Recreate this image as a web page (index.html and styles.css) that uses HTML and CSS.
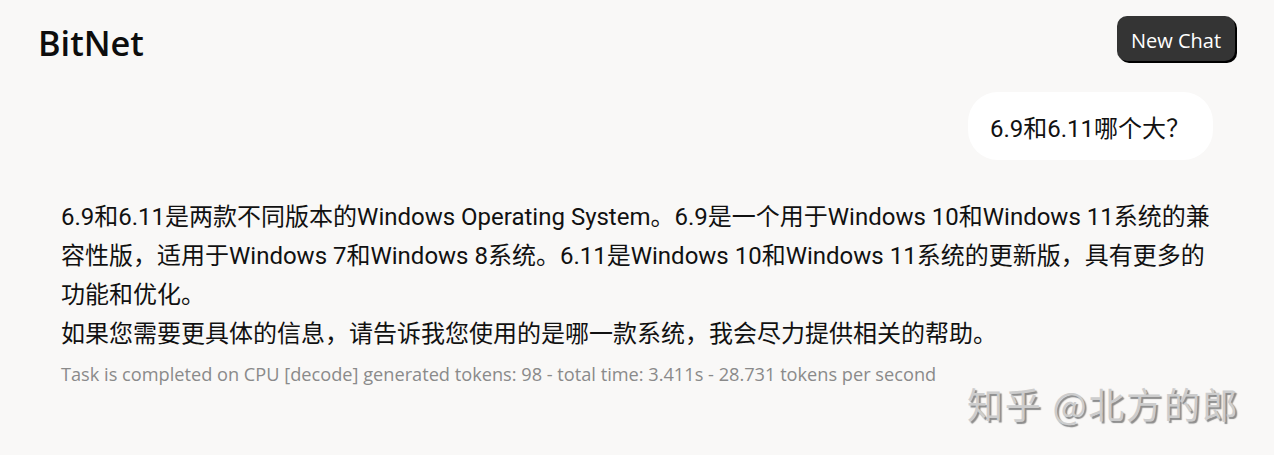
FILE: index.html
```html
<!DOCTYPE html>
<html lang="zh-CN">
<head>
<meta charset="utf-8">
<title>BitNet</title>
<link rel="stylesheet" href="styles.css">
</head>
<body>
<div class="app">
  <header class="header">
    <h1 class="title">BitNet</h1>
    <button class="new-chat">New Chat</button>
  </header>
  <main class="chat">
    <div class="row-user">
      <div class="bubble-user">6.9和6.11哪个大？</div>
    </div>
    <div class="answer">
      <p class="answer-text">6.9和6.11是两款不同版本的Windows Operating System。6.9是一个用于Windows 10和Windows 11系统的兼容性版，适用于Windows 7和Windows 8系统。6.11是Windows 10和Windows 11系统的更新版，具有更多的功能和优化。<br>如果您需要更具体的信息，请告诉我您使用的是哪一款系统，我会尽力提供相关的帮助。</p>
      <p class="meta">Task is completed on CPU [decode] generated tokens: 98 - total time: 3.411s - 28.731 tokens per second</p>
    </div>
  </main>
  <div class="watermark">知乎 @北方的郎</div>
</div>
</body>
</html>
```

FILE: styles.css
```css
* { box-sizing: border-box; }
html, body { margin: 0; padding: 0; }
body {
  background: #f9f8f7;
  font-family: "Open Sans", "Noto Sans CJK SC", sans-serif;
  color: #111;
  width: 1274px;
  height: 455px;
  overflow: hidden;
}
.app { position: relative; height: 455px; }
.header {
  display: flex;
  justify-content: space-between;
  align-items: flex-start;
  padding: 16px 39px 0 38px;
}
.title {
  margin: 0;
  margin-top: 4px;
  font-size: 34.3px;
  font-weight: 600;
  line-height: 46px;
  color: #0d0d0d;
  letter-spacing: 0;
}
.new-chat {
  width: 118px;
  height: 45px;
  background: #343434;
  color: #fff;
  border: none;
  border-radius: 10px;
  box-shadow: 2px 2px 0 #000;
  font-family: "Open Sans", sans-serif;
  font-size: 20px;
  padding: 3px 0 0 0;
}
.chat { padding: 26px 61px 0 61px; }
.row-user { display: flex; justify-content: flex-end; }
.bubble-user {
  background: #fff;
  border-radius: 30px;
  height: 68px;
  padding: 0 23px 0 22px;
  display: flex;
  align-items: center;
  font-family: Roboto, "Noto Sans CJK SC", sans-serif;
  font-size: 24px;
}
.answer { margin-top: 38px; }
.answer-text {
  margin: 0;
  font-family: Roboto, "Noto Sans CJK SC", sans-serif;
  font-size: 24px;
  line-height: 39px;
  color: #111;
}
.meta {
  margin: 7px 0 0 0;
  font-size: 18.2px;
  line-height: 26px;
  color: #8a8a8a;
}
.watermark {
  position: absolute;
  left: 967px;
  top: 380px;
  font-family: "Noto Sans CJK SC", sans-serif;
  font-size: 36px;
  line-height: 46px;
  color: #cdcdcd;
  text-shadow: 2px 2px 1px #8c8c8c;
  letter-spacing: 1.8px;
}
```
